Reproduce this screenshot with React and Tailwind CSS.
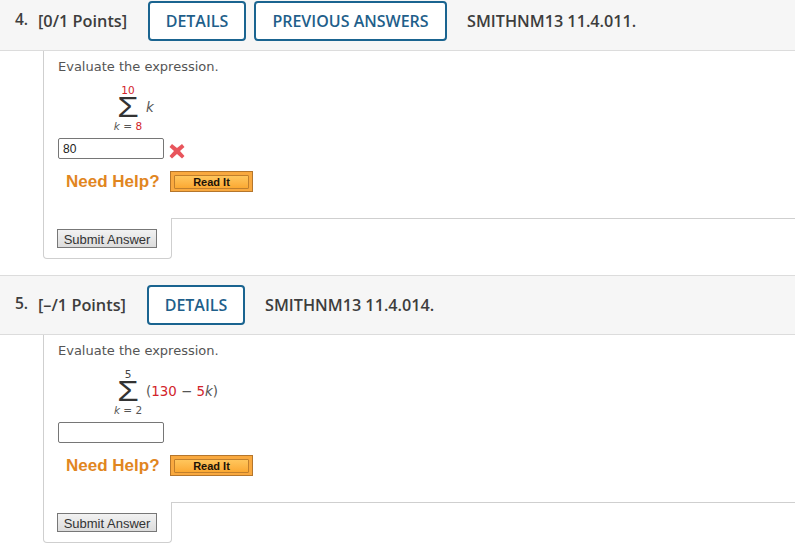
function ReadIt() {
  return (
    <div className="flex h-[21px] w-[83px] items-center justify-center border border-[#b5762c] bg-[#f9a93f] p-[3px]">
      <div className="flex h-[14px] w-full items-center justify-center rounded-[1px] border border-[#c17f2c] bg-gradient-to-b from-[#ffc65c] to-[#fba932] pt-[2px] font-['Liberation_Sans',sans-serif] text-[11px] font-bold text-[#1c1308]">
        Read It
      </div>
    </div>
  )
}

function Sum({ upper, lower, children, upperClass }) {
  return (
    <div className="ml-[55px] mb-[6px] mt-[8px] flex h-[48px] items-center font-['DejaVu_Sans',sans-serif] text-[#555]">
      <div className="flex w-[30px] flex-col items-center">
        <span className={`h-[12px] text-[10.5px] leading-[12px] ${upperClass}`}>{upper}</span>
        <span className="h-[22px] scale-x-[1.2] font-['Liberation_Sans',sans-serif] text-[29px] leading-[22px] text-[#333]">Σ</span>
        <span className="h-[14px] whitespace-nowrap text-[10.5px] leading-[17px]">{lower}</span>
      </div>
      <div className="ml-[3px] text-[13.4px]">{children}</div>
    </div>
  )
}

function WrongMark() {
  return (
    <svg width="16" height="16" viewBox="0 0 16 16" className="ml-[5px] mt-[5px]">
      <path d="M3 1 L8 5 L13 1 L15.5 4 L11 8 L15.5 13 L13 15.5 L8 11 L3 15.5 L0.5 13 L5 8 L0.5 4 Z" fill="#e8555c" />
    </svg>
  )
}

function Question({ number, points, pointsClass, buttons, code, answer, wrong, upper, lower, upperClass, headerClass, children }) {
  return (
    <section>
      <div className={`flex items-start bg-[#f6f6f6] pl-[15px] font-['Open_Sans',sans-serif] font-semibold text-[#3d3d3d] ${headerClass}`}>
        <span className="flex h-[40px] w-[23px] items-center text-[15.5px] -translate-y-[1px]">{number}</span>
        <span className={`flex h-[40px] items-center whitespace-nowrap text-[16.3px] ${pointsClass}`}>{points}</span>
        <div className="flex gap-[8px]">
          {buttons.map((button) => (
            <button
              key={button.label}
              className={`h-[40px] rounded-[4px] border-2 border-[#1a6490] bg-white text-[16px] font-semibold text-[#1f5f8b] ${button.width}`}
            >
              {button.label}
            </button>
          ))}
        </div>
        <span className="ml-[20px] flex h-[40px] items-center whitespace-nowrap text-[16.2px]">{code}</span>
      </div>
      <div className="border-t border-[#dcdcdc] pl-[43px]">
        <div className="h-[167px] border-l border-[#cfcfcf] pl-[14px]">
          <p className="pt-[7px] font-['DejaVu_Sans',sans-serif] text-[13px] leading-[18px] text-[#555]">
            Evaluate the expression.
          </p>
          <Sum upper={upper} lower={lower} upperClass={upperClass}>{children}</Sum>
          <div className="flex h-[22px]">
            <div className="flex h-[21px] w-[106px] items-center rounded-[2px] border border-[#767676] bg-white pl-[4px] font-['Liberation_Sans',sans-serif] text-[12px] text-[#222]">
              {answer}
            </div>
            {wrong && <WrongMark />}
          </div>
          <div className="mt-[11px] flex h-[21px] items-center pl-[8px]">
            <span className="w-[104px] whitespace-nowrap font-['Liberation_Sans',sans-serif] text-[17px] font-bold text-[#e1861f]">
              Need Help?
            </span>
            <ReadIt />
          </div>
        </div>
        <div className="flex h-[41px]">
          <div className="w-[129px] rounded-b-[4px] border-x border-b border-[#cfcfcf] pl-[13px] pt-[11px]">
            <button className="flex h-[19px] w-[100px] items-center justify-center border border-[#777] bg-gradient-to-b from-[#f2f2f2] to-[#dcdcdc] pt-[2px] font-['Liberation_Sans',sans-serif] text-[13px] text-[#333]">
              Submit Answer
            </button>
          </div>
          <div className="flex-1 border-t border-[#cfcfcf]" />
        </div>
      </div>
    </section>
  )
}

export default function App() {
  return (
    <main className="h-[547px] w-[795px] overflow-hidden bg-white">
      <Question
        number="4."
        points="[0/1 Points]"
        pointsClass="w-[110px]"
        buttons={[
          { label: 'DETAILS', width: 'w-[98px]' },
          { label: 'PREVIOUS ANSWERS', width: 'w-[193px]' },
        ]}
        code="SMITHNM13 11.4.011."
        headerClass="h-[50px] pt-[1px]"
        answer="80"
        wrong
        upper="10"
        upperClass="text-[#d2232a]"
        lower={<><i>k</i> = <span className="text-[#d2232a]">8</span></>}
      >
        <i>k</i>
      </Question>
      <div className="h-[16px]" />
      <div className="border-t border-[#dcdcdc]" />
      <Question
        number="5."
        points="[–/1 Points]"
        pointsClass="w-[109px]"
        buttons={[{ label: 'DETAILS', width: 'w-[98px]' }]}
        code="SMITHNM13 11.4.014."
        headerClass="h-[58px] pt-[9px]"
        upper="5"
        upperClass="text-[#444]"
        lower={<><i>k</i> = 2</>}
      >
        (<span className="text-[#d2232a]">130</span> − <span className="text-[#d2232a]">5</span><i>k</i>)
      </Question>
    </main>
  )
}
